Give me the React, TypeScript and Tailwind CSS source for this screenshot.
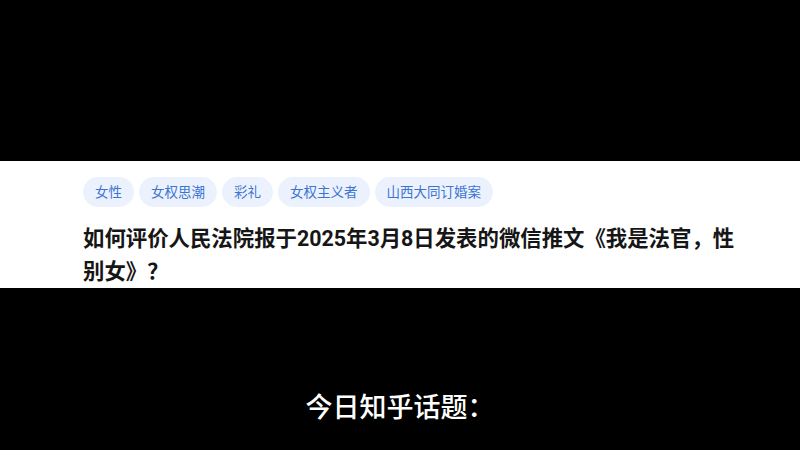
const tags = ["女性", "女权思潮", "彩礼", "女权主义者", "山西大同订婚案"];

export default function App() {
  return (
    <div
      className="flex h-[450px] w-[800px] flex-col bg-black"
      style={{ fontFamily: 'Roboto, "Noto Sans CJK SC", sans-serif' }}
    >
      {/* top letterbox */}
      <div className="h-[161px] shrink-0" />

      {/* question card */}
      <div className="h-[127px] shrink-0 overflow-hidden bg-white pl-[83px] pr-[40px] pt-[16px]">
        <div className="flex gap-[5px]">
          {tags.map((t) => (
            <span
              key={t}
              className="flex h-[30px] items-center rounded-full bg-[#ebf2fd] px-[12px] text-[13.5px] text-[#3b74d2]"
            >
              {t}
            </span>
          ))}
        </div>
        <h1 className="mt-[16px] w-[660px] text-[21.4px] font-bold leading-[32.5px] text-[#161616]">
          如何评价人民法院报于2025年3月8日发表的微信推文《我是法官，性别女》？
        </h1>
      </div>

      {/* caption */}
      <div className="flex flex-1 items-start justify-center pt-[107px]">
        <span className="text-[27px] font-medium leading-none text-white">今日知乎话题：</span>
      </div>
    </div>
  );
}
